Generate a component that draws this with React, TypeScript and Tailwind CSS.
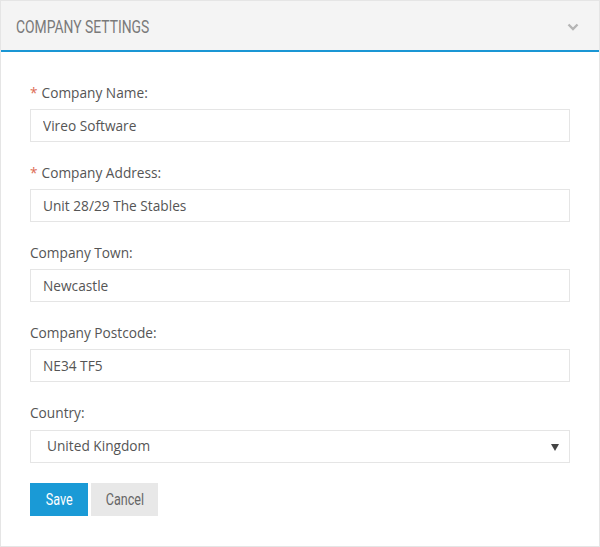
import React from "react";

const fields = [
  { label: "Company Name:", value: "Vireo Software", required: true },
  { label: "Company Address:", value: "Unit 28/29 The Stables", required: true },
  { label: "Company Town:", value: "Newcastle", required: false },
  { label: "Company Postcode:", value: "NE34 TF5", required: false },
];

const condensed = { fontFamily: 'Roboto, sans-serif' };

export default function App() {
  return (
    <div className="w-[600px] h-[547px] bg-white" style={{ fontFamily: '"Open Sans", sans-serif' }}>
      <div className="border border-[#e5e5e5] h-[547px]">
        <div className="h-[49px] bg-[#f4f4f4] border-b-2 border-[#1a96d4] flex items-center justify-between pl-[15px] pr-[20px] box-content">
          <h2 className="text-[19px] text-[#7a7a7a] uppercase pt-[3px] origin-left scale-x-[0.73] whitespace-nowrap" style={condensed}>
            Company Settings
          </h2>
          <svg width="12" height="8" viewBox="0 0 12 8" className="mt-[2px]">
            <polyline points="1.5,1.5 6,6 10.5,1.5" fill="none" stroke="#b5b5b5" strokeWidth="2.4" />
          </svg>
        </div>
        <div className="px-[29px] pt-[31px]">
          {fields.map((f) => (
            <div key={f.label} className="mb-[21px]">
              <label className="block text-[13.7px] leading-[20px] text-[#555] mb-[6px]">
                {f.required && <span className="text-[#dd6b55] mr-[4px]">*</span>}
                {f.label}
              </label>
              <input
                readOnly
                value={f.value}
                className="w-full h-[33px] border border-[#e5e5e5] px-[12px] text-[13.7px] text-[#555] outline-none"
              />
            </div>
          ))}
          <div>
            <label className="block text-[13.7px] leading-[20px] text-[#555] mb-[7px]">Country:</label>
            <div className="relative w-full h-[33px] border border-[#e5e5e5] flex items-center pl-[16px] text-[13.7px] text-[#555]">
              United Kingdom
              <svg width="8" height="7" viewBox="0 0 8 7" className="absolute right-[10px] top-[13px]">
                <polygon points="0,0 8,0 4,7" fill="#444" />
              </svg>
            </div>
          </div>
          <div className="flex gap-[3px] mt-[20px]">
            <button className="w-[58px] h-[33px] bg-[#1a9ad6] text-white text-[17px]" style={condensed}>
              <span className="inline-block scale-x-[0.74]">Save</span>
            </button>
            <button className="w-[67px] h-[33px] bg-[#e8e8e8] text-[#666] text-[17px]" style={condensed}>
              <span className="inline-block scale-x-[0.74]">Cancel</span>
            </button>
          </div>
        </div>
      </div>
    </div>
  );
}
